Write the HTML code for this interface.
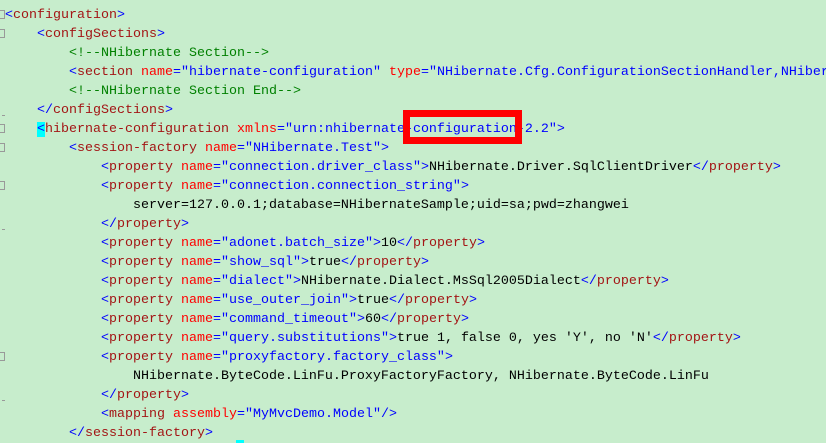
<!DOCTYPE html>
<html><head><meta charset="utf-8"><style>
html,body{margin:0;padding:0;width:826px;height:443px;overflow:hidden;background:#c7edcc;}
#c{position:absolute;left:5px;top:6px;width:821px;height:437px;overflow:hidden;font-family:"Liberation Mono","Noto Sans CJK SC",monospace;font-size:13.33px;line-height:19px;white-space:pre;color:#000;}
.b{color:#0000ff}.t{color:#a31515}.a{color:#ff0000}.v{color:#0000ff}.g{color:#008000}
.hl{background:#00ffff}
#box{position:absolute;left:403px;top:110px;width:105px;height:20px;border:7px solid #ff0000;}
.m{position:absolute;left:0;width:4px;height:7px;border:1px solid #999;border-left:none;}
.d{position:absolute;left:2px;width:3px;height:1px;background:#999}
#cur{position:absolute;left:236px;top:440px;width:8px;height:3px;background:#00ffff}
</style></head><body>
<div class="m" style="top:10px"></div>
<div class="m" style="top:29px"></div>
<div class="d" style="top:115px"></div>
<div class="m" style="top:124px"></div>
<div class="m" style="top:143px"></div>
<div class="m" style="top:181px"></div>
<div class="d" style="top:229px"></div>
<div class="m" style="top:352px"></div>
<div class="d" style="top:400px"></div>
<div id="c"><span class="b">&lt;</span><span class="t">configuration</span><span class="b">&gt;</span>
    <span class="b">&lt;</span><span class="t">configSections</span><span class="b">&gt;</span>
        <span class="g">&lt;!--NHibernate Section--&gt;</span>
        <span class="b">&lt;</span><span class="t">section</span> <span class="a">name</span><span class="b">=</span><span class="v">"hibernate-configuration"</span> <span class="a">type</span><span class="b">=</span><span class="v">"NHibernate.Cfg.ConfigurationSectionHandler,NHibernate"</span>
        <span class="g">&lt;!--NHibernate Section End--&gt;</span>
    <span class="b">&lt;/</span><span class="t">configSections</span><span class="b">&gt;</span>
    <span class="b hl">&lt;</span><span class="t">hibernate-configuration</span> <span class="a">xmlns</span><span class="b">=</span><span class="v">"urn:nhibernate-configuration-2.2"</span><span class="b">&gt;</span>
        <span class="b">&lt;</span><span class="t">session-factory</span> <span class="a">name</span><span class="b">=</span><span class="v">"NHibernate.Test"</span><span class="b">&gt;</span>
            <span class="b">&lt;</span><span class="t">property</span> <span class="a">name</span><span class="b">=</span><span class="v">"connection.driver_class"</span><span class="b">&gt;</span>NHibernate.Driver.SqlClientDriver<span class="b">&lt;/</span><span class="t">property</span><span class="b">&gt;</span>
            <span class="b">&lt;</span><span class="t">property</span> <span class="a">name</span><span class="b">=</span><span class="v">"connection.connection_string"</span><span class="b">&gt;</span>
                server=127.0.0.1;database=NHibernateSample;uid=sa;pwd=zhangwei
            <span class="b">&lt;/</span><span class="t">property</span><span class="b">&gt;</span>
            <span class="b">&lt;</span><span class="t">property</span> <span class="a">name</span><span class="b">=</span><span class="v">"adonet.batch_size"</span><span class="b">&gt;</span>10<span class="b">&lt;/</span><span class="t">property</span><span class="b">&gt;</span>
            <span class="b">&lt;</span><span class="t">property</span> <span class="a">name</span><span class="b">=</span><span class="v">"show_sql"</span><span class="b">&gt;</span>true<span class="b">&lt;/</span><span class="t">property</span><span class="b">&gt;</span>
            <span class="b">&lt;</span><span class="t">property</span> <span class="a">name</span><span class="b">=</span><span class="v">"dialect"</span><span class="b">&gt;</span>NHibernate.Dialect.MsSql2005Dialect<span class="b">&lt;/</span><span class="t">property</span><span class="b">&gt;</span>
            <span class="b">&lt;</span><span class="t">property</span> <span class="a">name</span><span class="b">=</span><span class="v">"use_outer_join"</span><span class="b">&gt;</span>true<span class="b">&lt;/</span><span class="t">property</span><span class="b">&gt;</span>
            <span class="b">&lt;</span><span class="t">property</span> <span class="a">name</span><span class="b">=</span><span class="v">"command_timeout"</span><span class="b">&gt;</span>60<span class="b">&lt;/</span><span class="t">property</span><span class="b">&gt;</span>
            <span class="b">&lt;</span><span class="t">property</span> <span class="a">name</span><span class="b">=</span><span class="v">"query.substitutions"</span><span class="b">&gt;</span>true 1, false 0, yes 'Y', no 'N'<span class="b">&lt;/</span><span class="t">property</span><span class="b">&gt;</span>
            <span class="b">&lt;</span><span class="t">property</span> <span class="a">name</span><span class="b">=</span><span class="v">"proxyfactory.factory_class"</span><span class="b">&gt;</span>
                NHibernate.ByteCode.LinFu.ProxyFactoryFactory, NHibernate.ByteCode.LinFu
            <span class="b">&lt;/</span><span class="t">property</span><span class="b">&gt;</span>
            <span class="b">&lt;</span><span class="t">mapping</span> <span class="a">assembly</span><span class="b">=</span><span class="v">"MyMvcDemo.Model"</span><span class="b">/&gt;</span>
        <span class="b">&lt;/</span><span class="t">session-factory</span><span class="b">&gt;</span></div>
<div id="box"></div>
<div id="cur"></div>
</body></html>
